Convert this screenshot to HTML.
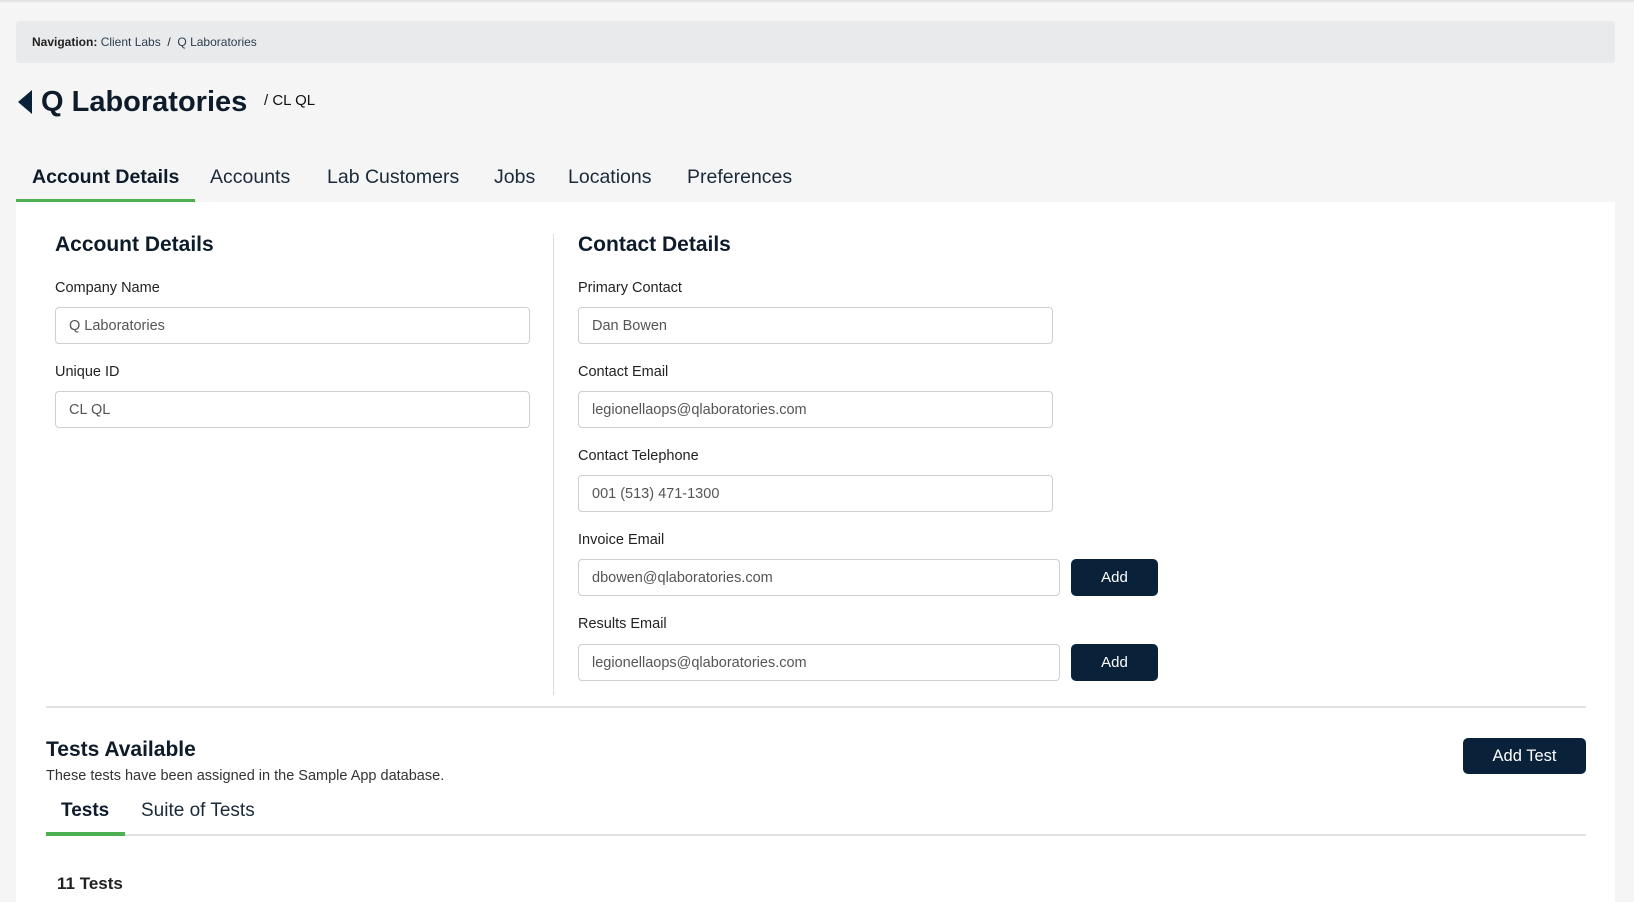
<!DOCTYPE html>
<html><head><meta charset="utf-8"><style>
*{box-sizing:border-box;margin:0;padding:0}
body{width:1634px;height:878px;overflow:hidden;background:#f5f5f5;font-family:"Liberation Sans",sans-serif;color:#111;position:relative}
.a{position:absolute;white-space:nowrap}
.top{position:absolute;left:0;top:0;width:1634px;height:3px;background:linear-gradient(#ddd,#f5f5f5)}
.bc{position:absolute;left:16px;top:21px;width:1599px;height:42px;background:#e9eaeb;border-radius:3px}
.card{position:absolute;left:16px;top:202px;width:1599px;height:700px;background:#fff}
.lbl{font-size:14.5px;color:#222}
.inp{position:absolute;height:37px;border:1px solid #cfcfcf;border-radius:4px;background:#fff;font-size:14.5px;color:#555;padding-left:13px;line-height:37px}
.btn{position:absolute;background:#0a2239;color:#fff;border-radius:5px;text-align:center;font-size:15px}
.tab{font-size:19.5px;color:#1a2a3a;top:166px}
</style></head><body>
<div class="top"></div>
<div class="bc"></div>
<div class="a" style="left:32px;top:35px;font-size:12px;color:#222"><b>Navigation:</b> <span style="color:#2c3e50">Client Labs</span> &nbsp;/&nbsp; <span style="color:#2c3e50">Q Laboratories</span></div>
<svg class="a" style="left:16px;top:89px" width="18" height="26" viewBox="0 0 18 26"><path d="M16 1 L2 13 L16 25 Z" fill="#0a2239"/></svg>
<div class="a" style="left:41px;top:86px;font-size:29px;font-weight:bold;color:#0d1b2a">Q Laboratories</div>
<div class="a" style="left:264px;top:92px;font-size:15px;color:#111">/ CL QL</div>
<div class="a tab" style="left:32px;font-weight:bold;color:#0d1b2a">Account Details</div>
<div class="a tab" style="left:210px">Accounts</div>
<div class="a tab" style="left:327px">Lab Customers</div>
<div class="a tab" style="left:494px">Jobs</div>
<div class="a tab" style="left:568px">Locations</div>
<div class="a tab" style="left:687px">Preferences</div>
<div class="card"></div>
<div class="a" style="left:16px;top:199px;width:179px;height:3px;background:#4caf50"></div>
<div class="a" style="left:55px;top:233px;font-size:21px;font-weight:bold;color:#0d1b2a">Account Details</div>
<div class="a lbl" style="left:55px;top:280px">Company Name</div>
<div class="inp" style="left:55px;top:307px;width:475px">Q Laboratories</div>
<div class="a lbl" style="left:55px;top:364px">Unique ID</div>
<div class="inp" style="left:55px;top:391px;width:475px">CL QL</div>
<div class="a" style="left:553px;top:234px;width:1px;height:461px;background:#ddd"></div>
<div class="a" style="left:578px;top:233px;font-size:21px;font-weight:bold;color:#0d1b2a">Contact Details</div>
<div class="a lbl" style="left:578px;top:280px">Primary Contact</div>
<div class="inp" style="left:578px;top:307px;width:475px">Dan Bowen</div>
<div class="a lbl" style="left:578px;top:364px">Contact Email</div>
<div class="inp" style="left:578px;top:391px;width:475px">legionellaops@qlaboratories.com</div>
<div class="a lbl" style="left:578px;top:448px">Contact Telephone</div>
<div class="inp" style="left:578px;top:475px;width:475px">001 (513) 471-1300</div>
<div class="a lbl" style="left:578px;top:532px">Invoice Email</div>
<div class="inp" style="left:578px;top:559px;width:482px">dbowen@qlaboratories.com</div>
<div class="btn" style="left:1071px;top:559px;width:87px;height:37px;line-height:37px">Add</div>
<div class="a lbl" style="left:578px;top:616px">Results Email</div>
<div class="inp" style="left:578px;top:644px;width:482px">legionellaops@qlaboratories.com</div>
<div class="btn" style="left:1071px;top:644px;width:87px;height:37px;line-height:37px">Add</div>
<div class="a" style="left:46px;top:706px;width:1540px;height:2px;background:#e2e2e2"></div>
<div class="a" style="left:46px;top:738px;font-size:21px;font-weight:bold;color:#0d1b2a">Tests Available</div>
<div class="a" style="left:46px;top:768px;font-size:14.5px;color:#333">These tests have been assigned in the Sample App database.</div>
<div class="btn" style="left:1463px;top:738px;width:123px;height:36px;line-height:36px;font-size:16.5px">Add Test</div>
<div class="a" style="left:61px;top:800px;font-size:19px;font-weight:bold;color:#0d1b2a">Tests</div>
<div class="a" style="left:141px;top:800px;font-size:19px;color:#1a2a3a">Suite of Tests</div>
<div class="a" style="left:46px;top:834px;width:1540px;height:2px;background:#e2e2e2"></div>
<div class="a" style="left:46px;top:832px;width:79px;height:4px;background:#4caf50"></div>
<div class="a" style="left:57px;top:874px;font-size:17px;font-weight:bold;color:#222">11 Tests</div>
</body></html>
